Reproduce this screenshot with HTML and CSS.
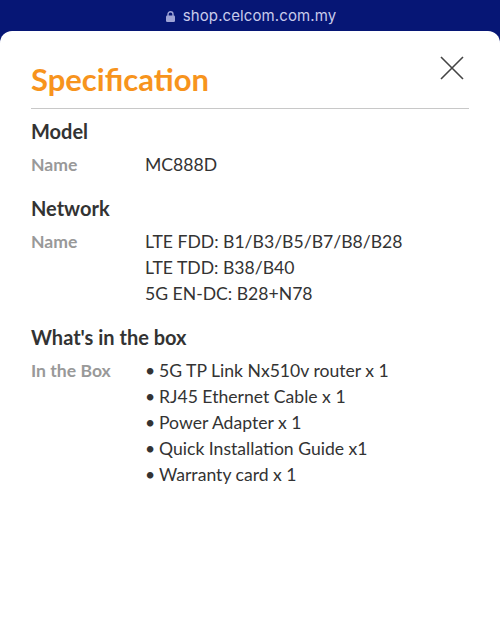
FILE: index.html
```html
<!DOCTYPE html>
<html>
<head>
<meta charset="utf-8">
<link rel="stylesheet" href="styles.css">
</head>
<body>
<div class="topbar">
  <svg class="lock" width="9" height="11" viewBox="0 0 9 11"><path d="M2 5V3.3a2.5 2.5 0 0 1 5 0V5" fill="none" stroke="#9ea3d6" stroke-width="1.4"/><rect x="0" y="4.6" width="9" height="6.4" rx="1.2" fill="#9ea3d6"/></svg>
  <span class="url">shop.celcom.com.my</span>
</div>
<div class="sheet">
  <div class="header">
    <h1 class="title">Specification</h1>
    <svg class="close" width="24" height="24" viewBox="0 0 24 24"><path d="M1 1L23 23M23 1L1 23" stroke="#444" stroke-width="1.6" fill="none"/></svg>
  </div>
  <div class="section">
    <h2 class="heading">Model</h2>
    <div class="row">
      <div class="label">Name</div>
      <div class="value">MC888D</div>
    </div>
  </div>
  <div class="section">
    <h2 class="heading">Network</h2>
    <div class="row">
      <div class="label">Name</div>
      <div class="value">LTE FDD: B1/B3/B5/B7/B8/B28<br>LTE TDD: B38/B40<br>5G EN-DC: B28+N78</div>
    </div>
  </div>
  <div class="section">
    <h2 class="heading">What's in the box</h2>
    <div class="row">
      <div class="label">In the Box</div>
      <ul class="value list">
        <li>5G TP Link Nx510v router x 1</li>
        <li>RJ45 Ethernet Cable x 1</li>
        <li>Power Adapter x 1</li>
        <li>Quick Installation Guide x1</li>
        <li>Warranty card x 1</li>
      </ul>
    </div>
  </div>
</div>
</body>
</html>
```

FILE: styles.css
```css
html, body {
  margin: 0;
  padding: 0;
  height: 100%;
}
body {
  background: #061675;
  font-family: Lato, "Noto Sans", sans-serif;
  overflow: hidden;
}
.topbar {
  height: 31px;
  display: flex;
  align-items: center;
  justify-content: center;
  gap: 8px;
  padding-left: 2px;
}
.lock {
  margin-top: 1px;
}
.url {
  font-family: Inter, "Liberation Sans", sans-serif;
  font-size: 15px;
  color: #c8cbeb;
  letter-spacing: 0.1px;
}
.sheet {
  background: #fff;
  border-radius: 12px 12px 0 0;
  height: 609px;
  padding: 0 31px;
  box-sizing: border-box;
}
.header {
  display: flex;
  justify-content: space-between;
  align-items: flex-start;
  border-bottom: 1px solid #c8c8c8;
  height: 77px;
}
.title {
  margin: 28px 0 0;
  font-size: 31px;
  font-weight: 700;
  color: #f7941d;
  line-height: 40px;
}
.close {
  margin-top: 25px;
  margin-right: 5px;
}
.heading {
  margin: 0;
  font-size: 20px;
  font-weight: 700;
  color: #333;
  line-height: 26px;
  padding-top: 9px;
}
.section + .section .heading {
  padding-top: 17px;
}
.row {
  display: flex;
  margin-top: 8px;
  font-size: 17.6px;
  line-height: 26px;
}
.label {
  width: 114px;
  flex: none;
  color: #999;
  font-weight: 700;
}
.value {
  color: #333;
}
.list {
  list-style: none;
  margin: 0;
  padding: 0;
}
.list li::before {
  content: "•";
  display: inline-block;
  width: 14px;
}
```
